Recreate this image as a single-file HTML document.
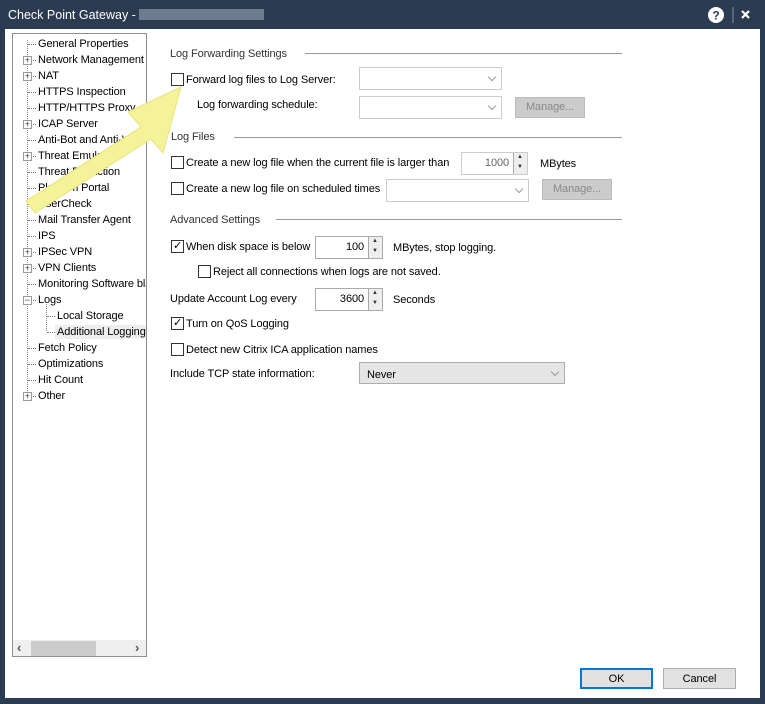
<!DOCTYPE html>
<html><head><meta charset="utf-8"><style>
*{margin:0;padding:0;box-sizing:border-box}
body{width:765px;height:704px;background:#2b3b52;position:relative;overflow:hidden;font-family:"Liberation Sans",sans-serif;font-size:11px;letter-spacing:-0.1px;color:#000}
.a{position:absolute}
.title{left:8px;top:8px;color:#fff;font-size:12.5px;letter-spacing:0}
.blur{left:139px;top:9px;width:125px;height:11px;background:#8a97a8;opacity:.7}
.win{left:5px;top:29px;width:755px;height:669px;background:#fff}
.tree{left:12px;top:33px;width:135px;height:624px;border:1px solid #8c9096;background:#fff;overflow:hidden}
.ti{position:absolute;left:25px;white-space:nowrap;margin-top:1px}
.dot{position:absolute;border-top:1px dotted #777;width:8px;left:15px}
.pl{position:absolute;left:10px;width:9px;height:9px;border:1px solid #999;background:#fff;font-size:9px;line-height:7px;text-align:center;color:#336}
.cb{position:absolute;width:13px;height:13px;border:1px solid #333;background:#fff}
.sec{position:absolute;color:#333;margin-top:1px}
.line{position:absolute;height:1px;background:#999}
.dd{position:absolute;border:1px solid #ccc;background:#fff}
.dd::after{content:"";position:absolute;right:6px;top:6px;width:5px;height:5px;border-right:1px solid #999;border-bottom:1px solid #999;transform:rotate(45deg)}
.btn{position:absolute;background:#ccc;border:1px solid #bbb;color:#888;text-align:center;line-height:19px}
.sp{position:absolute;border:1px solid #aaa;background:#fff;text-align:right;padding-right:18px;line-height:21px}
.sp i{position:absolute;right:0;top:0;width:14px;height:100%;border-left:1px solid #aaa;background:#eee}
.sp i::before{content:"▲";position:absolute;left:3px;top:-6px;font-size:6px;font-style:normal;color:#333}
.sp i::after{content:"▼";position:absolute;left:3px;top:4px;font-size:6px;font-style:normal;color:#333}
.t{position:absolute;white-space:nowrap;margin-top:1px}
</style></head><body>
<div class="a title">Check Point Gateway -</div>
<div class="a blur"></div>
<svg class="a" style="left:707px;top:6px" width="50" height="18"><circle cx="9" cy="9" r="8" fill="#fff"/><text x="9" y="13.5" font-size="12" font-weight="bold" text-anchor="middle" fill="#2b3b52" font-family="Liberation Sans">?</text><line x1="26" y1="1" x2="26" y2="17" stroke="#8090a5"/><path d="M35 5l7 7M42 5l-7 7" stroke="#fff" stroke-width="2.2"/></svg>
<div class="a win"></div>
<div class="a tree">
<div class="ti" style="top:3px">General Properties</div>
<div class="ti" style="top:19px">Network Management</div>
<div class="ti" style="top:35px">NAT</div>
<div class="ti" style="top:51px">HTTPS Inspection</div>
<div class="ti" style="top:67px">HTTP/HTTPS Proxy</div>
<div class="ti" style="top:83px">ICAP Server</div>
<div class="ti" style="top:99px">Anti-Bot and Anti-Virus</div>
<div class="ti" style="top:115px">Threat Emulation</div>
<div class="ti" style="top:131px">Threat Extraction</div>
<div class="ti" style="top:147px">Platform Portal</div>
<div class="ti" style="top:163px">UserCheck</div>
<div class="ti" style="top:179px">Mail Transfer Agent</div>
<div class="ti" style="top:195px">IPS</div>
<div class="ti" style="top:211px">IPSec VPN</div>
<div class="ti" style="top:227px">VPN Clients</div>
<div class="ti" style="top:243px">Monitoring Software blade</div>
<div class="ti" style="top:259px">Logs</div>
<div class="ti" style="top:275px;left:44px">Local Storage</div>
<div class="ti" style="top:290px;left:42px;background:#eee;padding:1px 2px">Additional Logging</div>
<div class="ti" style="top:307px">Fetch Policy</div>
<div class="ti" style="top:323px">Optimizations</div>
<div class="ti" style="top:339px">Hit Count</div>
<div class="ti" style="top:355px">Other</div>
<div class="a" style="left:14px;top:6px;width:1px;height:357px;border-left:1px dotted #888"></div>
<div class="a" style="left:33px;top:270px;width:1px;height:27px;border-left:1px dotted #888"></div>
<div class="dot" style="top:10px"></div><div class="dot" style="top:26px"></div><div class="dot" style="top:42px"></div><div class="dot" style="top:58px"></div><div class="dot" style="top:74px"></div><div class="dot" style="top:90px"></div><div class="dot" style="top:106px"></div><div class="dot" style="top:122px"></div><div class="dot" style="top:138px"></div><div class="dot" style="top:154px"></div><div class="dot" style="top:170px"></div><div class="dot" style="top:186px"></div><div class="dot" style="top:202px"></div><div class="dot" style="top:218px"></div><div class="dot" style="top:234px"></div><div class="dot" style="top:250px"></div><div class="dot" style="top:266px"></div><div class="dot" style="top:314px"></div><div class="dot" style="top:330px"></div><div class="dot" style="top:346px"></div><div class="dot" style="top:362px"></div>
<div class="dot" style="top:282px;left:34px"></div><div class="dot" style="top:298px;left:34px"></div>
<div class="pl" style="top:22px">+</div><div class="pl" style="top:38px">+</div><div class="pl" style="top:86px">+</div><div class="pl" style="top:118px">+</div><div class="pl" style="top:214px">+</div><div class="pl" style="top:230px">+</div><div class="pl" style="top:262px">−</div><div class="pl" style="top:358px">+</div>
<div class="a" style="left:0;top:606px;width:133px;height:17px;background:#efefef"></div>
<div class="a" style="left:18px;top:607px;width:65px;height:15px;background:#ccc"></div>
<div class="a" style="left:4px;top:606px;color:#555;font-size:13px;font-weight:bold">‹</div>
<div class="a" style="left:122px;top:606px;color:#555;font-size:13px;font-weight:bold">›</div>
</div>

<div class="sec" style="left:170px;top:47px">Log Forwarding Settings</div><div class="line" style="left:305px;top:53px;width:317px"></div>
<div class="cb" style="left:171px;top:73px"></div><div class="t" style="left:186px;top:73px">Forward log files to Log Server:</div>
<div class="dd" style="left:359px;top:67px;width:143px;height:23px"></div>
<div class="t" style="left:197px;top:98px">Log forwarding schedule:</div>
<div class="dd" style="left:359px;top:96px;width:143px;height:23px"></div>
<div class="btn" style="left:515px;top:97px;width:70px;height:21px">Manage...</div>

<div class="sec" style="left:171px;top:130px">Log Files</div><div class="line" style="left:234px;top:137px;width:388px"></div>
<div class="cb" style="left:171px;top:156px"></div><div class="t" style="left:186px;top:156px">Create a new log file when the current file is larger than</div>
<div class="sp" style="left:461px;top:152px;width:67px;height:23px;color:#666;border-color:#ccc">1000<i></i></div>
<div class="t" style="left:540px;top:157px">MBytes</div>
<div class="cb" style="left:171px;top:182px"></div><div class="t" style="left:186px;top:182px">Create a new log file on scheduled times</div>
<div class="dd" style="left:386px;top:179px;width:143px;height:23px"></div>
<div class="btn" style="left:542px;top:179px;width:70px;height:21px">Manage...</div>

<div class="sec" style="left:170px;top:213px">Advanced Settings</div><div class="line" style="left:276px;top:219px;width:346px"></div>
<div class="cb" style="left:171px;top:240px;font-size:11px;line-height:11px;text-align:center">✓</div><div class="t" style="left:186px;top:240px">When disk space is below</div>
<div class="sp" style="left:315px;top:236px;width:68px;height:23px">100<i></i></div>
<div class="t" style="left:393px;top:241px">MBytes, stop logging.</div>
<div class="cb" style="left:198px;top:265px"></div><div class="t" style="left:213px;top:265px">Reject all connections when logs are not saved.</div>
<div class="t" style="left:170px;top:292px">Update Account Log every</div>
<div class="sp" style="left:315px;top:288px;width:68px;height:23px">3600<i></i></div>
<div class="t" style="left:393px;top:293px">Seconds</div>
<div class="cb" style="left:171px;top:317px;font-size:11px;line-height:11px;text-align:center">✓</div><div class="t" style="left:186px;top:317px">Turn on QoS Logging</div>
<div class="cb" style="left:171px;top:343px"></div><div class="t" style="left:186px;top:343px">Detect new Citrix ICA application names</div>
<div class="t" style="left:170px;top:367px">Include TCP state information:</div>
<div class="dd" style="left:359px;top:362px;width:206px;height:22px;background:#e5e5e5;border-color:#adadad;padding:6px 0 0 7px">Never</div>

<div class="a" style="left:580px;top:668px;width:73px;height:21px;border:2px solid #0078d7;background:#e1e1e1;text-align:center;line-height:18px">OK</div>
<div class="a" style="left:663px;top:668px;width:73px;height:21px;border:1px solid #adadad;background:#e1e1e1;text-align:center;line-height:20px">Cancel</div>

<svg class="a" style="left:0;top:0" width="200" height="230"><polygon points="181,87 128,112 141,127 26,201 35,213 151,139 163,153" fill="#f5f39a" stroke="#e8e47a" stroke-width="1"/></svg>
</body></html>
